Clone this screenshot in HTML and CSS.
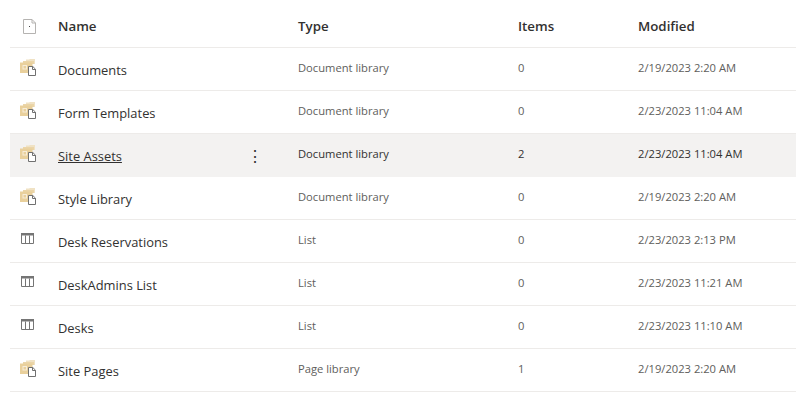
FILE: index.html
```html
<!DOCTYPE html>
<html lang="en">
<head>
<meta charset="utf-8">
<title>Site contents</title>
<link rel="stylesheet" href="styles.css">
</head>
<body>
<svg class="defs" width="0" height="0" aria-hidden="true">
  <symbol id="lib" viewBox="0 0 17 17">
    <path d="M6 0.500h3l1-.5h5v5H6z" fill="#f0e2c4"/>
    <path d="M3 2h11v3H3z" fill="#ebd5a8"/>
    <path d="M0 3.500h12.500V14H0z" fill="#e9d09c"/>
    <path d="M2.500 6h4.500v4.500H2.500z" fill="#f7edd9"/>
    <path d="M3.500 7h2.500v2.500H3.500z" fill="#e9d09c"/>
    <path d="M8.500 7.500h4.300l2.700 2.700v6.300h-7z" fill="#fff" stroke="#707070" stroke-width="1"/>
    <path d="M12.500 7.500v3h3" fill="none" stroke="#707070"/>
  </symbol>
  <symbol id="list" viewBox="0 0 13 11">
    <path d="M0 0h13v2.500H0z" fill="#757575"/>
    <path d="M.5 .5h12v10H.5zM4.500 2.500v8M8.500 2.500v8" fill="none" stroke="#757575"/>
  </symbol>
</svg>
<main class="table">
  <div class="row head">
    <div class="ic"><svg class="doc" viewBox="0 0 13 15"><path d="M.5 .5h8.500l3.500 3.500v10.500H.5z" fill="#fff" stroke="#b5b3b1"/><path d="M9 .5v3.500h3.500" fill="none" stroke="#b5b3b1"/><path d="M6 7h1v1H6z" fill="#444"/></svg></div>
    <div class="name">Name</div><div>Type</div><div>Items</div><div>Modified</div>
  </div>
  <div class="row">
    <div class="ic"><svg class="lib"><use href="#lib"/></svg></div>
    <div class="name">Documents</div><div>Document library</div><div>0</div><div>2/19/2023 2:20 AM</div>
  </div>
  <div class="row">
    <div class="ic"><svg class="lib"><use href="#lib"/></svg></div>
    <div class="name">Form Templates</div><div>Document library</div><div>0</div><div>2/23/2023 11:04 AM</div>
  </div>
  <div class="row hover">
    <div class="ic"><svg class="lib"><use href="#lib"/></svg></div>
    <div class="name"><a href="#">Site Assets</a><span class="more">⋮</span></div><div>Document library</div><div>2</div><div>2/23/2023 11:04 AM</div>
  </div>
  <div class="row">
    <div class="ic"><svg class="lib"><use href="#lib"/></svg></div>
    <div class="name">Style Library</div><div>Document library</div><div>0</div><div>2/19/2023 2:20 AM</div>
  </div>
  <div class="row">
    <div class="ic"><svg class="list"><use href="#list"/></svg></div>
    <div class="name">Desk Reservations</div><div>List</div><div>0</div><div>2/23/2023 2:13 PM</div>
  </div>
  <div class="row">
    <div class="ic"><svg class="list"><use href="#list"/></svg></div>
    <div class="name">DeskAdmins List</div><div>List</div><div>0</div><div>2/23/2023 11:21 AM</div>
  </div>
  <div class="row">
    <div class="ic"><svg class="list"><use href="#list"/></svg></div>
    <div class="name">Desks</div><div>List</div><div>0</div><div>2/23/2023 11:10 AM</div>
  </div>
  <div class="row">
    <div class="ic"><svg class="lib"><use href="#lib"/></svg></div>
    <div class="name">Site Pages</div><div>Page library</div><div>1</div><div>2/19/2023 2:20 AM</div>
  </div>
</main>
</body>
</html>
```
FILE: styles.css
```css
html, body { margin: 0; background: #fff; overflow: hidden; }
body { height: 403px; padding: 5px 7px 0 10px; box-sizing: border-box; font-family: "Open Sans", "Noto Sans", sans-serif; }
.defs { position: absolute; }
.table { display: flex; flex-direction: column; }
.row {
  display: grid;
  grid-template-columns: 48px 240px 220px 120px 1fr;
  align-items: center;
  height: 43px;
  box-sizing: border-box;
  border-bottom: 1px solid #edebe9;
  font-size: 11.200px;
  color: #605e5c;
  padding-bottom: 4px;
}
.row.head { font-size: 13.300px; font-weight: 550; color: #323130; padding-bottom: 0; }
.row.hover { background: #f3f2f1; color: #323130; border-bottom-color: #f3f2f1; }
.ic { display: flex; padding-left: 10px; }
.name { font-size: 12.900px; color: #323130; display: flex; justify-content: space-between; padding: 5px 35px 0 0; }
.head .name { font-size: 13.300px; padding-top: 0; }
.name a { color: #323130; }
.more { font-size: 16px; line-height: 18px; color: #323130; }
.lib { width: 17px; height: 17px; }
.list { width: 13px; height: 11px; margin: -2px 0 0 1px; }
.doc { width: 13px; height: 15px; margin-left: 3px; }
```
